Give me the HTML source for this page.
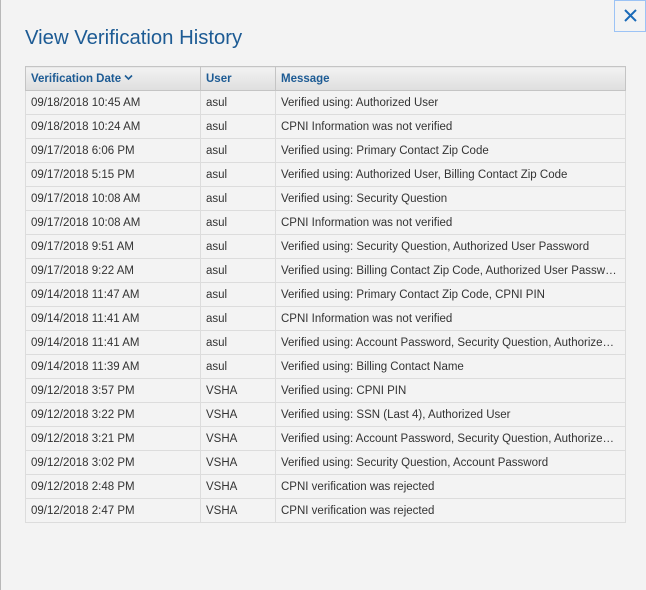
<!DOCTYPE html>
<html><head><style>
body{margin:0;width:646px;height:590px;background:#f3f3f3;font-family:"Liberation Sans",sans-serif;position:relative;overflow:hidden}
.lb{position:absolute;left:0;top:0;width:1px;height:590px;background:#b8b8b8}
.close{position:absolute;left:614px;top:0;width:30px;height:30px;border:1px solid #9cc3f5;background:#f3f3f3}
h1{position:absolute;left:25px;top:27px;margin:0;font-weight:normal;font-size:20.3px;color:#1d5b94}
table{position:absolute;left:25px;top:66px;width:600px;border-collapse:collapse;table-layout:fixed;font-size:11.5px;color:#333}
th{height:23px;background:linear-gradient(#f2f2f2,#dedede);border:1px solid #c4c4c4;text-align:left;padding:0 5px;color:#1d5b94;font-weight:bold}
td{height:23px;border:1px solid #dcdcdc;padding:0 5px;white-space:nowrap;overflow:hidden;text-overflow:ellipsis}
</style></head><body>
<div class="lb"></div>
<div class="close"><svg width="30" height="30"><path d="M10 9L21 20M21 9L10 20" stroke="#1a6ab8" stroke-width="2"/></svg></div>
<h1>View Verification History</h1>
<table>
<colgroup><col style="width:175px"><col style="width:75px"><col style="width:350px"></colgroup>
<tr><th>Verification Date <svg width="9" height="7" style="vertical-align:1px"><path d="M1 1.5L4.5 5L8 1.5" fill="none" stroke="#1d5b94" stroke-width="1.6"/></svg></th><th>User</th><th>Message</th></tr>
<tr><td>09/18/2018 10:45 AM</td><td>asul</td><td>Verified using: Authorized User</td></tr>
<tr><td>09/18/2018 10:24 AM</td><td>asul</td><td>CPNI Information was not verified</td></tr>
<tr><td>09/17/2018 6:06 PM</td><td>asul</td><td>Verified using: Primary Contact Zip Code</td></tr>
<tr><td>09/17/2018 5:15 PM</td><td>asul</td><td>Verified using: Authorized User, Billing Contact Zip Code</td></tr>
<tr><td>09/17/2018 10:08 AM</td><td>asul</td><td>Verified using: Security Question</td></tr>
<tr><td>09/17/2018 10:08 AM</td><td>asul</td><td>CPNI Information was not verified</td></tr>
<tr><td>09/17/2018 9:51 AM</td><td>asul</td><td>Verified using: Security Question, Authorized User Password</td></tr>
<tr><td>09/17/2018 9:22 AM</td><td>asul</td><td>Verified using: Billing Contact Zip Code, Authorized User Password</td></tr>
<tr><td>09/14/2018 11:47 AM</td><td>asul</td><td>Verified using: Primary Contact Zip Code, CPNI PIN</td></tr>
<tr><td>09/14/2018 11:41 AM</td><td>asul</td><td>CPNI Information was not verified</td></tr>
<tr><td>09/14/2018 11:41 AM</td><td>asul</td><td>Verified using: Account Password, Security Question, Authorized User</td></tr>
<tr><td>09/14/2018 11:39 AM</td><td>asul</td><td>Verified using: Billing Contact Name</td></tr>
<tr><td>09/12/2018 3:57 PM</td><td>VSHA</td><td>Verified using: CPNI PIN</td></tr>
<tr><td>09/12/2018 3:22 PM</td><td>VSHA</td><td>Verified using: SSN (Last 4), Authorized User</td></tr>
<tr><td>09/12/2018 3:21 PM</td><td>VSHA</td><td>Verified using: Account Password, Security Question, Authorized User</td></tr>
<tr><td>09/12/2018 3:02 PM</td><td>VSHA</td><td>Verified using: Security Question, Account Password</td></tr>
<tr><td>09/12/2018 2:48 PM</td><td>VSHA</td><td>CPNI verification was rejected</td></tr>
<tr><td>09/12/2018 2:47 PM</td><td>VSHA</td><td>CPNI verification was rejected</td></tr>
</table>
</body></html>
